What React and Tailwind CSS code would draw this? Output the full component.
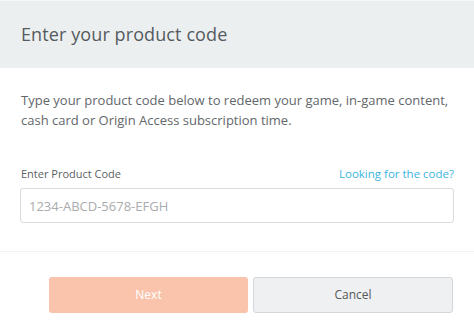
import React from "react";

export default function App() {
  return (
    <div className="w-[474px] h-[334px] bg-white overflow-hidden font-['Open_Sans',sans-serif] flex flex-col">
      {/* Header */}
      <div className="h-[68px] bg-[#eceff0] border-t border-[#f4f6f7] flex items-center px-[21px]">
        <h1 className="text-[18px] text-[#555b5e] tracking-[0.1px]">Enter your product code</h1>
      </div>

      {/* Body */}
      <div className="px-[20px] pt-[22px]">
        <p className="text-[13px] leading-[20px] text-[#63676a] pl-[1px]">
          Type your product code below to redeem your game, in-game content,
          <br />
          cash card or Origin Access subscription time.
        </p>

        <div className="mt-[35px] flex justify-between items-end pl-[1px]">
          <span className="text-[11px] text-[#5b5f62]">Enter Product Code</span>
          <a className="text-[11.5px] text-[#3cb4e0]">Looking for the code?</a>
        </div>

        <input
          placeholder="1234-ABCD-5678-EFGH"
          className="mt-[6px] w-[434px] h-[35px] border border-[#d9dcde] rounded-[3px] px-[8px] text-[13px] text-[#555] placeholder:text-[#a9acae] outline-none"
        />
      </div>

      <div className="mt-[28px] border-t border-[#f1f2f3]" />

      {/* Buttons */}
      <div className="mt-[25px] flex gap-[5px] pl-[49px]">
        <button className="w-[199px] h-[36px] rounded-[3px] bg-[#f9c3ac] text-white text-[12px]">Next</button>
        <button className="w-[200px] h-[36px] rounded-[3px] bg-[#eef0f2] border border-[#d3d7da] text-[#545859] text-[12px]">Cancel</button>
      </div>
    </div>
  );
}
